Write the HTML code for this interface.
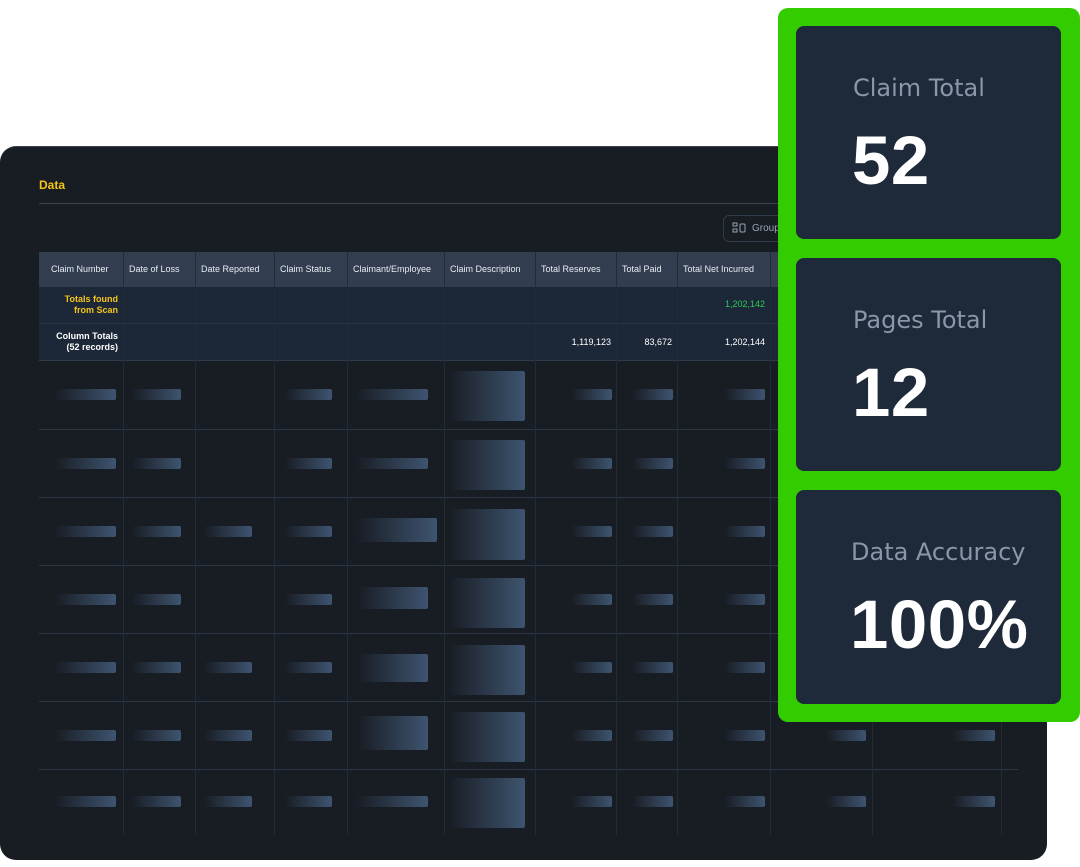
<!DOCTYPE html>
<html><head><meta charset="utf-8"><style>
*{margin:0;padding:0;box-sizing:border-box}
body{width:1080px;height:867px;background:#fff;position:relative;overflow:hidden;font-family:"Liberation Sans",sans-serif}
.abs{position:absolute}
.card{left:0;top:146px;width:1047px;height:714px;background:#181c23;border-radius:16px;border-top:1px solid #3a4250}
.b{position:absolute;height:11px;border-radius:2px;background:linear-gradient(90deg,rgba(61,80,104,0),#3e5470)}
.d{position:absolute;left:451px;width:74px;height:50px;border-radius:2px;background:linear-gradient(90deg,rgba(61,80,104,0.05),#3e5470)}
.v{position:absolute;width:1px;top:252px;height:583px;background:#232b36}
.h{position:absolute;left:39px;width:979px;height:1px;background:#2d3644}
.th{position:absolute;top:252px;height:35px;line-height:35px;font-size:9px;color:#e8ecf2}
.num{position:absolute;font-size:9px;color:#fff;text-align:right}
.gbox{left:778px;top:8px;width:302px;height:714px;background:#33cc00;border-radius:10px}
.sc{position:absolute;left:796px;width:265px;background:#1e2939;border-radius:8px}
.lbl{position:absolute;font-size:24px;color:#8b96a8;font-family:"DejaVu Sans","Liberation Sans",sans-serif;letter-spacing:0px}
.big{position:absolute;font-size:69px;font-weight:bold;color:#fff;letter-spacing:0.5px}
</style></head><body>
<div class="abs card"></div>
<div class="abs" style="left:39px;top:178px;font-size:12px;font-weight:bold;color:#f5c518">Data</div>
<div class="abs" style="left:39px;top:203px;width:1008px;height:1px;background:#3a4352"></div>
<div class="abs" style="left:723px;top:215px;width:90px;height:27px;border:1px solid #2f3a4a;border-radius:6px;color:#9aa4b2;font-size:10px;line-height:25px;padding-left:28px">Group</div>
<svg class="abs" style="left:732px;top:222px" width="14" height="12" viewBox="0 0 14 12" fill="none" stroke="#9aa4b2" stroke-width="1"><rect x="1" y="1" width="4" height="3"/><rect x="1" y="7" width="4" height="3"/><rect x="8" y="2" width="5" height="8" rx="1"/></svg>
<div class="abs" style="left:39px;top:252px;width:979px;height:35px;background:#323e50"></div>
<div class="abs" style="left:39px;top:287px;width:979px;height:73px;background:#1c2737"></div>
<div class="th" style="left:51px">Claim Number</div>
<div class="th" style="left:129px">Date of Loss</div>
<div class="th" style="left:201px">Date Reported</div>
<div class="th" style="left:280px">Claim Status</div>
<div class="th" style="left:353px">Claimant/Employee</div>
<div class="th" style="left:450px">Claim Description</div>
<div class="th" style="left:541px">Total Reserves</div>
<div class="th" style="left:622px">Total Paid</div>
<div class="th" style="left:683px">Total Net Incurred</div>
<div class="num" style="left:39px;top:294px;width:79px;color:#f5c518;font-weight:bold;line-height:11px">Totals found<br>from Scan</div>
<div class="num" style="left:39px;top:331px;width:79px;font-weight:bold;line-height:11px">Column Totals<br>(52 records)</div>
<div class="num" style="left:677px;top:299px;width:88px;color:#2ecc55">1,202,142</div>
<div class="num" style="left:535px;top:337px;width:76px">1,119,123</div>
<div class="num" style="left:616px;top:337px;width:56px">83,672</div>
<div class="num" style="left:677px;top:337px;width:88px">1,202,144</div>
<div class="h" style="top:323px;background:#2a3444"></div>
<div class="h" style="top:360px;background:#2f3a4a"></div>
<div class="h" style="top:429px"></div><div class="h" style="top:497px"></div><div class="h" style="top:565px"></div><div class="h" style="top:633px"></div><div class="h" style="top:701px"></div><div class="h" style="top:769px"></div>
<div class="v" style="left:123px"></div><div class="v" style="left:195px"></div><div class="v" style="left:274px"></div><div class="v" style="left:347px"></div><div class="v" style="left:444px"></div><div class="v" style="left:535px"></div><div class="v" style="left:616px"></div><div class="v" style="left:677px"></div><div class="v" style="left:770px"></div><div class="v" style="left:872px"></div><div class="v" style="left:1001px"></div>
<div class="b" style="left:54px;top:389px;width:62px"></div><div class="b" style="left:131px;top:389px;width:50px"></div><div class="b" style="left:284px;top:389px;width:48px"></div><div class="b" style="left:355px;top:389px;width:73px"></div><div class="d" style="top:371px"></div><div class="b" style="left:571px;top:389px;width:41px"></div><div class="b" style="left:632px;top:389px;width:41px"></div><div class="b" style="left:724px;top:389px;width:41px"></div>
<div class="b" style="left:54px;top:458px;width:62px"></div><div class="b" style="left:131px;top:458px;width:50px"></div><div class="b" style="left:284px;top:458px;width:48px"></div><div class="b" style="left:355px;top:458px;width:73px"></div><div class="d" style="top:440px"></div><div class="b" style="left:571px;top:458px;width:41px"></div><div class="b" style="left:632px;top:458px;width:41px"></div><div class="b" style="left:724px;top:458px;width:41px"></div>
<div class="b" style="left:54px;top:526px;width:62px"></div><div class="b" style="left:131px;top:526px;width:50px"></div><div class="b" style="left:203px;top:526px;width:49px"></div><div class="b" style="left:284px;top:526px;width:48px"></div><div class="b" style="left:355px;top:518px;width:82px;height:24px"></div><div class="d" style="top:509px;height:51px"></div><div class="b" style="left:571px;top:526px;width:41px"></div><div class="b" style="left:632px;top:526px;width:41px"></div><div class="b" style="left:724px;top:526px;width:41px"></div>
<div class="b" style="left:54px;top:594px;width:62px"></div><div class="b" style="left:131px;top:594px;width:50px"></div><div class="b" style="left:284px;top:594px;width:48px"></div><div class="b" style="left:357px;top:587px;width:71px;height:22px"></div><div class="d" style="top:578px"></div><div class="b" style="left:571px;top:594px;width:41px"></div><div class="b" style="left:632px;top:594px;width:41px"></div><div class="b" style="left:724px;top:594px;width:41px"></div>
<div class="b" style="left:54px;top:662px;width:62px"></div><div class="b" style="left:131px;top:662px;width:50px"></div><div class="b" style="left:203px;top:662px;width:49px"></div><div class="b" style="left:284px;top:662px;width:48px"></div><div class="b" style="left:357px;top:654px;width:71px;height:28px"></div><div class="d" style="top:645px"></div><div class="b" style="left:571px;top:662px;width:41px"></div><div class="b" style="left:632px;top:662px;width:41px"></div><div class="b" style="left:724px;top:662px;width:41px"></div>
<div class="b" style="left:54px;top:730px;width:62px"></div><div class="b" style="left:131px;top:730px;width:50px"></div><div class="b" style="left:203px;top:730px;width:49px"></div><div class="b" style="left:284px;top:730px;width:48px"></div><div class="b" style="left:357px;top:716px;width:71px;height:34px"></div><div class="d" style="top:712px"></div><div class="b" style="left:571px;top:730px;width:41px"></div><div class="b" style="left:632px;top:730px;width:41px"></div><div class="b" style="left:724px;top:730px;width:41px"></div><div class="b" style="left:826px;top:730px;width:40px"></div><div class="b" style="left:952px;top:730px;width:43px"></div>
<div class="b" style="left:54px;top:796px;width:62px"></div><div class="b" style="left:131px;top:796px;width:50px"></div><div class="b" style="left:203px;top:796px;width:49px"></div><div class="b" style="left:284px;top:796px;width:48px"></div><div class="b" style="left:355px;top:796px;width:73px"></div><div class="d" style="top:778px"></div><div class="b" style="left:571px;top:796px;width:41px"></div><div class="b" style="left:632px;top:796px;width:41px"></div><div class="b" style="left:724px;top:796px;width:41px"></div><div class="b" style="left:826px;top:796px;width:40px"></div><div class="b" style="left:952px;top:796px;width:43px"></div>
<div class="abs gbox"></div>
<div class="sc" style="top:26px;height:213px"></div>
<div class="sc" style="top:258px;height:213px"></div>
<div class="sc" style="top:490px;height:214px"></div>
<div class="lbl" style="left:853px;top:74px">Claim Total</div>
<div class="big" style="left:852px;top:121px">52</div>
<div class="lbl" style="left:853px;top:306px">Pages Total</div>
<div class="big" style="left:852px;top:353px">12</div>
<div class="lbl" style="left:851px;top:538px">Data Accuracy</div>
<div class="big" style="left:850px;top:585px">100%</div>
</body></html>
